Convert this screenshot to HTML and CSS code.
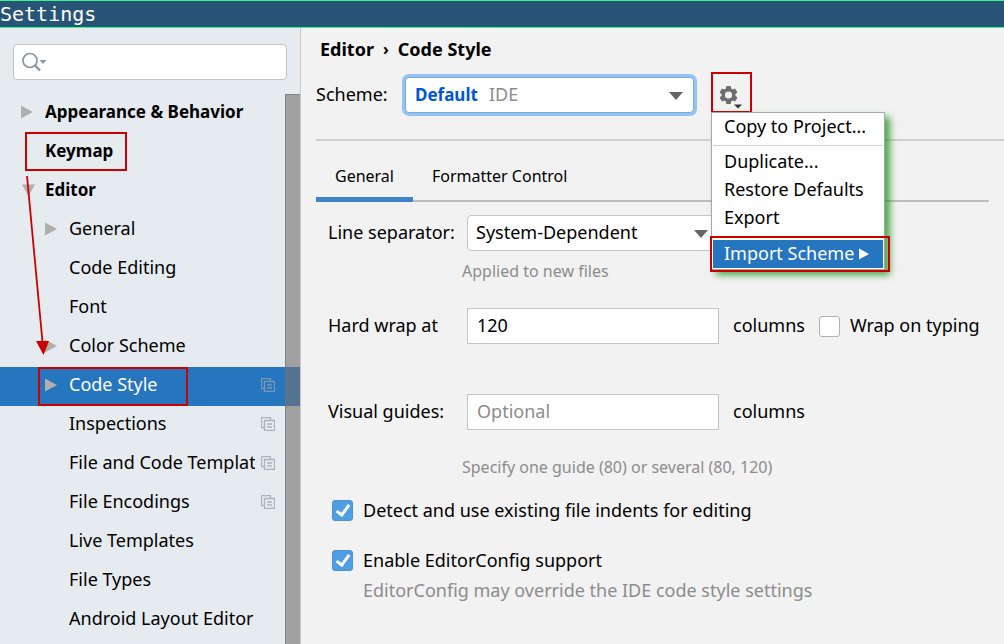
FILE: index.html
```html
<!DOCTYPE html>
<html lang="en">
<head>
<meta charset="utf-8">
<title>Settings</title>
<link rel="stylesheet" href="styles.css">
</head>
<body>
<svg class="defs" aria-hidden="true">
  <symbol id="right" viewBox="0 0 12 14"><path d="M0 0.5L12 7L0 13.5Z" fill="currentColor"/></symbol>
  <symbol id="open" viewBox="0 0 14 14"><path d="M1 1.5H14L7.500 13Z" fill="currentColor"/></symbol>
  <symbol id="down" viewBox="0 0 14 8"><path d="M0 0H14L7 8Z" fill="currentColor"/></symbol>
  <symbol id="copy" viewBox="0 0 14 14"><path d="M3.5 10.5H0.5V0.5H9.5V3M3.5 3.5H13.5V13.5H3.5ZM6 7H11M6 10H11" fill="none" stroke="currentColor" stroke-width="1.3"/></symbol>
</svg>
<header class="titlebar">Settings</header>
<div class="window">
  <aside class="sidebar">
    <div class="search">
      <svg class="search-icon" viewBox="0 0 25 20" aria-hidden="true">
        <circle cx="8" cy="8.5" r="7" fill="none" stroke="#8d979d" stroke-width="1.7"/>
        <path d="M12.5 13L18 18.5" stroke="#8d979d" stroke-width="2.4"/>
        <path d="M17.5 8H24.5L21 12Z" fill="#8d979d"/>
      </svg>
      <input class="search-input" type="text" aria-label="Search settings">
    </div>
    <div class="tree-area">
      <ul class="tree">
        <li class="row top"><svg class="twist"><use href="#right"/></svg><span class="name">Appearance &amp; Behavior</span></li>
        <li class="row top"><span class="twist"></span><span class="name">Keymap</span><span class="mark mark-keymap"></span></li>
        <li class="row top"><svg class="twist open"><use href="#open"/></svg><span class="name">Editor</span>
          <svg class="arrow" viewBox="0 0 24 182" aria-hidden="true"><path d="M3 0L18.500 166" stroke="#cc0000" stroke-width="1.800"/><path d="M12 165L25 165L19.500 179Z" fill="#cc0000"/></svg></li>
        <li class="row"><svg class="twist"><use href="#right"/></svg><span class="name">General</span></li>
        <li class="row"><span class="twist"></span><span class="name">Code Editing</span></li>
        <li class="row"><span class="twist"></span><span class="name">Font</span></li>
        <li class="row"><svg class="twist"><use href="#right"/></svg><span class="name">Color Scheme</span></li>
        <li class="row selected"><svg class="twist"><use href="#right"/></svg><span class="name">Code Style</span><svg class="copy"><use href="#copy"/></svg><span class="mark mark-style"></span></li>
        <li class="row"><span class="twist"></span><span class="name">Inspections</span><svg class="copy"><use href="#copy"/></svg></li>
        <li class="row"><span class="twist"></span><span class="name">File and Code Templates</span><svg class="copy"><use href="#copy"/></svg></li>
        <li class="row"><span class="twist"></span><span class="name">File Encodings</span><svg class="copy"><use href="#copy"/></svg></li>
        <li class="row"><span class="twist"></span><span class="name">Live Templates</span></li>
        <li class="row"><span class="twist"></span><span class="name">File Types</span></li>
        <li class="row"><span class="twist"></span><span class="name">Android Layout Editor</span></li>
      </ul>
      <div class="scrollbar"></div>
    </div>
  </aside>
  <main class="main">
    <h1 class="crumbs"><span>Editor</span><span class="sep">›</span><span>Code Style</span></h1>
    <div class="scheme">
      <label class="scheme-label" for="scheme">Scheme:</label>
      <div class="combo focused">
        <select id="scheme" class="select"><option>Default</option></select>
        <span class="origin">IDE</span>
        <svg class="chevron"><use href="#down"/></svg>
      </div>
      <div class="gear-wrap">
        <button class="gear" type="button" aria-label="Scheme actions">
          <svg class="gear-icon" viewBox="0 0 24 26" aria-hidden="true">
            <g fill="#6e6e6e"><rect x="7" y="1" width="5" height="18" rx="1"/><rect x="7" y="1" width="5" height="18" rx="1" transform="rotate(60 9.500 10)"/><rect x="7" y="1" width="5" height="18" rx="1" transform="rotate(120 9.500 10)"/></g>
            <circle cx="9.500" cy="10" r="5.200" fill="none" stroke="#6e6e6e" stroke-width="3.600"/>
            <circle cx="9.500" cy="10" r="3.600" fill="#f2f2f2"/>
            <path d="M15 19.500H23L19 23.500Z" fill="#333"/>
          </svg>
        </button>
        <div class="menu" role="menu">
          <button class="item" type="button" role="menuitem">Copy to Project...</button>
          <hr class="rule">
          <button class="item" type="button" role="menuitem">Duplicate...</button>
          <button class="item" type="button" role="menuitem">Restore Defaults</button>
          <button class="item" type="button" role="menuitem">Export</button>
          <button class="item active" type="button" role="menuitem">Import Scheme<svg class="submenu"><use href="#right"/></svg><span class="mark mark-import"></span></button>
        </div>
      </div>
    </div>
    <div class="tabs" role="tablist">
      <button class="tab current" type="button" role="tab" aria-selected="true">General</button>
      <button class="tab" type="button" role="tab" aria-selected="false">Formatter Control</button>
    </div>
    <form class="form">
      <div class="field">
        <label class="label" for="sep">Line separator:</label>
        <div class="combo"><select id="sep" class="select"><option>System-Dependent</option></select><svg class="chevron"><use href="#down"/></svg></div>
      </div>
      <p class="hint">Applied to new files</p>
      <div class="field wrap-field">
        <label class="label" for="wrap">Hard wrap at</label>
        <input id="wrap" class="text" type="text" value="120">
        <span class="unit">columns</span>
        <label class="check"><input class="box" type="checkbox"><span class="check-text">Wrap on typing</span></label>
      </div>
      <div class="field guide-field">
        <label class="label" for="guides">Visual guides:</label>
        <input id="guides" class="text" type="text" placeholder="Optional">
        <span class="unit">columns</span>
      </div>
      <p class="hint guide-hint">Specify one guide (80) or several (80, 120)</p>
      <label class="check option"><input class="box" type="checkbox" checked>Detect and use existing file indents for editing</label>
      <label class="check option"><input class="box" type="checkbox" checked>Enable EditorConfig support</label>
      <p class="note">EditorConfig may override the IDE code style settings</p>
    </form>
  </main>
</div>
</body>
</html>
```
FILE: styles.css
```css
* { box-sizing: border-box; }
body {
  margin: 0;
  height: 100vh;
  display: flex;
  flex-direction: column;
  overflow: hidden;
  background: #f2f2f2;
  color: #000;
  font: 18px/28px "Noto Sans", sans-serif;
}
button, input, select { font: inherit; color: inherit; margin: 0; }
button { border: 0; background: none; padding: 0; }
svg { display: block; }
p { margin: 0; }
.defs { display: none; }

.titlebar {
  flex: none;
  border: solid #3ef58a;
  border-width: 1px 0;
  background: #285577;
  color: #fff;
  font: 20px/26px "DejaVu Sans Mono", monospace;
}
.window { flex: 1; display: flex; min-height: 0; }

.sidebar {
  flex: none;
  width: 301px;
  display: flex;
  flex-direction: column;
  border-right: 1px solid #c9c9c9;
  background: #e6ebef;
}
.search {
  display: flex;
  align-items: center;
  margin: 16px 13px 14px;
  height: 36px;
  padding-left: 8px;
  border: 1px solid #c4c4c4;
  border-radius: 4px;
  background: #fff;
}
.search-icon { width: 25px; height: 20px; flex: none; }
.search-input { flex: 1; min-width: 0; border: 0; outline: 0; background: none; }

.tree-area { position: relative; flex: 1; min-height: 0; }
.tree { margin: 0; padding: 0; list-style: none; }
.row {
  position: relative;
  display: flex;
  align-items: center;
  height: 39px;
  padding: 0 45px 4px;
}
.row.top { padding-left: 21px; font-size: 17px; font-weight: bold; }
.selected { background: #2675bf; color: #fff; }
.twist { flex: none; width: 12px; height: 14px; margin-right: 12px; color: #afafaf; }
.twist.open { width: 14px; margin-right: 10px; }
.name { flex: 1; overflow: hidden; padding-bottom: 2px; white-space: nowrap; }
.top .name { padding-bottom: 0; }
.copy { position: absolute; right: 25px; top: 11px; width: 14px; height: 14px; color: #a9b5bc; }
.selected .copy { color: #7797b5; }
.scrollbar {
  position: absolute;
  top: 0;
  right: 0;
  bottom: 0;
  width: 15px;
  border: solid rgba(110, 110, 110, 0.6);
  border-width: 1px 0 0 1px;
  background: rgba(115, 115, 115, 0.62);
}

.mark { position: absolute; border: 2px solid #cc0000; pointer-events: none; }
.mark-keymap { left: 25px; top: -1px; width: 102px; height: 39px; }
.mark-style { left: 38px; top: 0; width: 150px; height: 39px; }
.mark-import { inset: -4px -7px -4px -3px; }
.arrow { position: absolute; z-index: 1; left: 24px; top: 4px; width: 24px; height: 182px; overflow: visible; }

.main { flex: 1; min-width: 0; padding: 7px 0 0 15px; }
.crumbs {
  display: flex;
  gap: 9px;
  margin: 0 0 9px;
  padding-left: 4px;
  font-size: 18px;
  font-weight: bold;
}
.sep { font-size: 16px; }
.scheme {
  display: flex;
  align-items: flex-start;
  height: 69px;
  border-bottom: 2px solid #cfcfcf;
}
.scheme-label { width: 89px; margin-top: 8px; }
.combo { position: relative; flex: none; width: 252px; }
.select {
  display: block;
  appearance: none;
  width: 100%;
  height: 36px;
  padding: 0 8px 2px;
  border: 1px solid #c4c4c4;
  border-radius: 4px;
  background: #fff;
  outline: 0;
}
.chevron { position: absolute; right: 11px; top: 15px; width: 14px; height: 8px; color: #666; pointer-events: none; }
.focused { width: 289px; margin-top: 5px; }
.focused .select {
  border-color: #7aa9dd;
  box-shadow: 0 0 0 3px #97c3f3;
  color: #0055dd;
  font-size: 17px;
  font-weight: bold;
  padding: 0 9px;
}
.origin { position: absolute; left: 84px; top: 3px; color: #8c8c8c; pointer-events: none; }

.gear-wrap { position: relative; margin-left: 17px; width: 41px; height: 41px; }
.gear {
  display: flex;
  align-items: flex-start;
  width: 41px;
  height: 41px;
  padding: 11px 0 0 6px;
  border: 2px solid #cc0000;
}
.gear-icon { flex: none; width: 24px; height: 26px; }
.menu {
  position: absolute;
  z-index: 2;
  left: 0;
  top: 40px;
  width: 174px;
  padding: 0 1px 1px;
  border: 1px solid #a8a8a8;
  background: #fff;
  box-shadow: 5px 5px 7px rgba(20, 140, 20, 0.75);
}
.item {
  position: relative;
  display: flex;
  align-items: center;
  width: 100%;
  height: 28px;
  padding: 0 11px 2px;
  white-space: nowrap;
}
.rule { height: 1px; margin: 4px 0 2px; border: 0; background: #d0d0d0; }
.active { margin-top: 8px; background: #2675bf; color: #fff; }
.submenu { flex: none; width: 10px; height: 12px; margin: 2px 0 0 5px; }

.tabs {
  display: flex;
  margin-right: 15px;
  height: 61px;
  border-bottom: 2px solid #bdbdbd;
}
.tab { height: 61px; padding: 13px 19px 0; font-size: 16px; border-bottom: 5px solid transparent; }
.current { border-bottom-color: #4083c9; }

.form { padding: 13px 0 0 12px; }
.field { display: flex; align-items: center; height: 36px; }
.label { flex: none; width: 139px; padding-bottom: 2px; }
.text {
  flex: none;
  width: 252px;
  height: 36px;
  padding: 0 9px 2px;
  border: 1px solid #c4c4c4;
  background: #fff;
  outline: 0;
}
.text::placeholder { color: #8c8c8c; opacity: 1; }
.unit { margin: 0 14px; padding-bottom: 2px; }
.hint { margin-left: 134px; padding-top: 6px; color: #8c8c8c; font-size: 16px; }
.wrap-field { margin-top: 23px; }
.guide-field { margin-top: 50px; }
.guide-hint { padding-top: 23px; }
.check { display: flex; align-items: center; gap: 10px; white-space: nowrap; }
.check-text { padding-bottom: 2px; }
.option { padding-left: 4px; margin-top: 15px; }
.option + .option { margin-top: 22px; }
.box {
  appearance: none;
  flex: none;
  width: 21px;
  height: 21px;
  border: 1px solid #b0b0b0;
  border-radius: 3px;
  background: #fff;
}
.box:checked {
  display: grid;
  place-items: center;
  border-color: #4a94dc;
  background: #4f9de3;
}
.box:checked::after {
  content: "";
  box-sizing: border-box;
  width: 8px;
  height: 14px;
  margin-bottom: 3px;
  border: solid #fff;
  border-width: 0 3px 3px 0;
  transform: rotate(36deg);
}
.note { margin-left: 35px; padding-top: 2px; color: #8c8c8c; }
```
